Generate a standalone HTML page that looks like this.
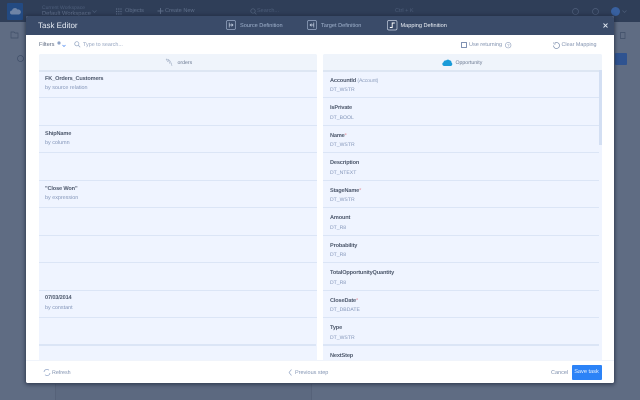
<!DOCTYPE html>
<html><head><meta charset="utf-8">
<style>
html,body{margin:0;padding:0;width:640px;height:400px;overflow:hidden;background:#5f6c83;font-family:"Liberation Sans",sans-serif;text-rendering:geometricPrecision}
div,span{position:absolute;white-space:nowrap}
svg{position:absolute;overflow:visible}
#wrap{position:absolute;left:0;top:0;width:640px;height:400px;filter:blur(.3px);overflow:hidden}
.b{font-weight:bold;color:#4d586c;font-size:5.6px;letter-spacing:-.15px;line-height:8px}
.s{color:#8395b9;font-size:5.4px;line-height:8px}
.d{color:#8395b9;font-size:5.100px;line-height:8px}
.l{height:1px;background:#dbe5f6}
.n{color:#6d7c96;font-size:5.5px;line-height:8px}
</style></head><body>
<div id="wrap">
<div style="left:0;top:0;width:640px;height:22px;background:#2f3e58"></div>
<div style="left:6.500px;top:3px;width:16.500px;height:16.500px;background:#234a82;border-radius:1px"></div>
<svg style="left:10px;top:8px" width="11" height="7"><path d="M2 6.500a2 2 0 0 1 0-4 3 3 0 0 1 5.500-1 2.500 2.500 0 0 1 1.500 5z" fill="#6f84a6"/></svg>
<div style="left:42px;top:3.500px;font-size:5px;color:#4e5f7c;line-height:8px">Current Workspace</div>
<div style="left:42px;top:9.500px;font-size:5.800px;color:#61708b;line-height:8px">Default Workspace</div>
<svg style="left:92px;top:10px" width="6" height="4"><path d="M.5.500l2 2 2-2" fill="none" stroke="#4f5f7b" stroke-width=".6"/></svg>
<div style="left:125px;top:7px;font-size:5.600px;color:#5f6f8a;line-height:8px">Objects</div>
<div style="left:165px;top:7px;font-size:5.600px;color:#5f6f8a;line-height:8px">Create New</div>
<div style="left:257px;top:7px;font-size:5.500px;color:#4c5c78;line-height:8px">Search...</div>
<div style="left:395px;top:7px;font-size:5.500px;color:#4c5c78;line-height:8px">Ctrl + K</div>
<svg style="left:116px;top:8px" width="8" height="8"><path d="M0 1h6M0 3.500h6M0 6h6" stroke="#5a6a85" stroke-width="1.300" stroke-dasharray="1.200 1"/></svg>
<svg style="left:157px;top:8px" width="7" height="7"><path d="M3.500 0v6M.5 3h6" stroke="#5a6a85"/></svg>
<svg style="left:250px;top:8px" width="7" height="7"><circle cx="3" cy="3" r="2.200" fill="none" stroke="#55657f" stroke-width=".7"/><path d="M4.600 4.600l1.800 1.800" stroke="#55657f" stroke-width=".7"/></svg>
<svg style="left:572px;top:7.500px" width="7" height="7"><circle cx="3.500" cy="3.500" r="3" fill="none" stroke="#4f5f7b" stroke-width=".7"/></svg>
<svg style="left:592px;top:7.500px" width="7" height="7"><circle cx="3.500" cy="3.500" r="3" fill="none" stroke="#4f5f7b" stroke-width=".7"/></svg>
<div style="left:611px;top:7px;width:9px;height:9px;border-radius:50%;background:#38609f"></div>
<svg style="left:622px;top:10px" width="5" height="4"><path d="M.5.500l2 2 2-2" fill="none" stroke="#4f5f7b" stroke-width=".6"/></svg>
<div style="left:0;top:22px;width:26px;height:378px;background:#5f6c83"></div>
<svg style="left:10px;top:31px" width="9" height="8"><path d="M1 1h3l1 1h3v5H1z" fill="none" stroke="#3f4e68" stroke-width=".7"/></svg>
<svg style="left:17px;top:55px" width="7" height="7"><circle cx="3.500" cy="3.500" r="3" fill="none" stroke="#3f4e68" stroke-width=".7"/></svg>
<div style="left:615px;top:53px;width:12px;height:12px;background:#2f5390;border-radius:1px"></div>
<svg style="left:620px;top:31px" width="6" height="8"><path d="M.5 1.500h4.500v6H.5z" fill="none" stroke="#3f4e68" stroke-width=".7"/></svg>
<div style="left:55px;top:384px;width:255px;height:16px;background:#5c6980;border-left:1px solid #566279;border-right:1px solid #566279"></div>

<!-- modal -->
<div style="left:26px;top:16px;width:588px;height:367px;background:#fff;border-radius:2px;box-shadow:0 0 3px 1px rgba(30,40,60,.5),0 2px 4px rgba(30,40,60,.35)"></div>
<div style="left:26px;top:16px;width:588px;height:19px;background:#3a4b69;border-radius:2px 2px 0 0"></div>
<div style="left:38px;top:20.500px;font-size:8px;line-height:10px;color:#e6ebf3">Task Editor</div>

<svg style="left:226px;top:20px" width="11" height="11"><rect x=".5" y=".5" width="9" height="9" rx="1.500" fill="none" stroke="#9aabc6" stroke-width=".7"/><path d="M3.200 2.500v5M3.200 5h3.500M5.500 3.700L7 5 5.500 6.300" fill="none" stroke="#c4d0e2" stroke-width=".7"/></svg>
<div style="left:240px;top:21.500px;color:#a0b2cd;font-size:5.600px;line-height:8px">Source Definition</div>
<svg style="left:307px;top:20px" width="11" height="11"><rect x=".5" y=".5" width="9" height="9" rx="1.500" fill="none" stroke="#9aabc6" stroke-width=".7"/><path d="M6.800 2.500v5M6.800 5H3.300M4.500 3.700L3 5l1.500 1.300" fill="none" stroke="#c4d0e2" stroke-width=".7"/></svg>
<div style="left:321px;top:21.500px;color:#a0b2cd;font-size:5.600px;line-height:8px">Target Definition</div>
<svg style="left:387px;top:20px" width="11" height="11"><rect x=".5" y=".5" width="9.500" height="9.500" rx="1.500" fill="none" stroke="#c6d0e0" stroke-width=".7"/><path d="M2.800 7.500h2.400V3h2.600" fill="none" stroke="#fff" stroke-width=".9"/></svg>
<div style="left:400.500px;top:21.500px;color:#eef2f8;font-size:5.600px;line-height:8px">Mapping Definition</div>
<svg style="left:603px;top:23px" width="6" height="6"><path d="M.5.500l4 4M4.500.500l-4 4" stroke="#dfe6f0" stroke-width=".9"/></svg>

<!-- toolbar -->
<div class="n" style="left:39px;top:41px;font-size:5.700px;color:#59667e">Filters</div>
<svg style="left:56px;top:41px" width="11" height="7"><circle cx="3" cy="2" r="1.600" fill="#8fa3c6"/><path d="M6.500 4l1.500 1.500L9.500 4" fill="none" stroke="#4d8af0" stroke-width=".7"/></svg>
<svg style="left:74px;top:41px" width="7" height="7"><circle cx="2.800" cy="2.800" r="2.100" fill="none" stroke="#93a5c2" stroke-width=".7"/><path d="M4.400 4.400l1.800 1.800" stroke="#93a5c2" stroke-width=".7"/></svg>
<div class="s" style="left:83px;top:41px;color:#93a3bf">Type to search...</div>
<div style="left:461px;top:41.500px;width:4px;height:4px;border:.8px solid #7e90b2;border-radius:.5px"></div>
<div class="n" style="left:469px;top:41px;color:#7f90ae">Use returning</div>
<svg style="left:504.500px;top:41.500px" width="7" height="7"><circle cx="3.200" cy="3.200" r="2.800" fill="none" stroke="#8a9bb9" stroke-width=".6"/><text x="3.200" y="5" font-size="4.500" text-anchor="middle" fill="#8a9bb9" font-family="Liberation Sans">?</text></svg>
<svg style="left:553px;top:41.500px" width="7" height="7"><path d="M1.600 1.200A3 3 0 1 1 .5 3.500" fill="none" stroke="#7b8dac" stroke-width=".7"/><path d="M.6.300l.4 1.900 1.900-.3" fill="none" stroke="#7b8dac" stroke-width=".5"/></svg>
<div class="n" style="left:561.500px;top:41px;font-size:5.400px;color:#7f90ae">Clear Mapping</div>

<!-- left panel -->
<div style="left:39px;top:54px;width:278px;height:307px;background:#eff4ff;border-radius:2px 2px 0 0"></div>
<div style="left:39px;top:54px;width:278px;height:16px;background:#eff4fb;border-radius:2px 2px 0 0"></div>
<div style="left:39px;top:70px;width:278px;height:1.500px;background:#dde6f3"></div>
<svg style="left:165px;top:58px" width="9" height="9"><path d="M1 1c3 0 5 2 6 7M1 1l2 3M3 1c0 2 2 3 2 5" fill="none" stroke="#a3b0c5" stroke-width=".6"/></svg>
<div class="n" style="left:177.500px;top:58.500px;font-size:5.200px;color:#6c7a92">orders</div>

<!-- right panel -->
<div style="left:323px;top:54px;width:279px;height:307px;background:#eff4ff;border-radius:2px 2px 0 0"></div>
<div style="left:323px;top:54px;width:279px;height:16px;background:#eff4fb;border-radius:2px 2px 0 0"></div>
<div style="left:323px;top:70px;width:279px;height:1.500px;background:#dde6f3"></div>
<svg style="left:442px;top:58.500px" width="11" height="8"><path d="M2 7a2 2 0 0 1-.5-3.800A2 2 0 0 1 4 1.500a2.500 2.500 0 0 1 3.500-.3 2.300 2.300 0 0 1 2 2.300A2 2 0 0 1 9 7z" fill="#1a9bd8"/></svg>
<div class="n" style="left:455.500px;top:58.500px;font-size:5.200px;color:#6c7a92">Opportunity</div>

<!-- left lines -->
<div class="l" style="left:39px;top:97px;width:278px"></div>
<div class="l" style="left:39px;top:125px;width:278px"></div>
<div class="l" style="left:39px;top:152px;width:278px"></div>
<div class="l" style="left:39px;top:180px;width:278px"></div>
<div class="l" style="left:39px;top:207px;width:278px"></div>
<div class="l" style="left:39px;top:235px;width:278px"></div>
<div class="l" style="left:39px;top:262px;width:278px"></div>
<div class="l" style="left:39px;top:290px;width:278px"></div>
<div class="l" style="left:39px;top:317px;width:278px"></div>
<div class="l" style="left:39px;top:344px;width:277px;height:1.500px"></div>

<div class="b" style="left:45px;top:74.500px">FK_Orders_Customers</div>
<div class="s" style="left:45px;top:83.500px">by source relation</div>
<div class="b" style="left:45px;top:129.500px">ShipName</div>
<div class="s" style="left:45px;top:138.500px">by column</div>
<div class="b" style="left:45px;top:184.500px">"Close Won"</div>
<div class="s" style="left:45px;top:193.500px">by expression</div>
<div class="b" style="left:45px;top:294px">07/03/2014</div>
<div class="s" style="left:45px;top:303.500px">by constant</div>

<!-- right lines -->
<div class="l" style="left:323px;top:97px;width:276px"></div>
<div class="l" style="left:323px;top:125px;width:276px"></div>
<div class="l" style="left:323px;top:152px;width:276px"></div>
<div class="l" style="left:323px;top:180px;width:276px"></div>
<div class="l" style="left:323px;top:207px;width:276px"></div>
<div class="l" style="left:323px;top:235px;width:276px"></div>
<div class="l" style="left:323px;top:262px;width:276px"></div>
<div class="l" style="left:323px;top:290px;width:276px"></div>
<div class="l" style="left:323px;top:317px;width:276px"></div>
<div class="l" style="left:323px;top:344px;width:276px;height:1.500px"></div>
<div style="left:599px;top:70px;width:3px;height:75px;background:#d3dff3"></div>

<div class="b" style="left:330px;top:76.500px">AccountId <span style="position:static;font-weight:normal;color:#8fa0bf;font-size:5.200px">(Account)</span></div>
<div class="d" style="left:330px;top:86px">DT_WSTR</div>
<div class="b" style="left:330px;top:104px">IsPrivate</div>
<div class="d" style="left:330px;top:113.500px">DT_BOOL</div>
<div class="b" style="left:330px;top:131.500px">Name<span style="position:static;color:#e58a94;font-weight:normal">*</span></div>
<div class="d" style="left:330px;top:141px">DT_WSTR</div>
<div class="b" style="left:330px;top:159px">Description</div>
<div class="d" style="left:330px;top:168.500px">DT_NTEXT</div>
<div class="b" style="left:330px;top:186.500px">StageName<span style="position:static;color:#e58a94;font-weight:normal">*</span></div>
<div class="d" style="left:330px;top:196px">DT_WSTR</div>
<div class="b" style="left:330px;top:214px">Amount</div>
<div class="d" style="left:330px;top:223.500px">DT_R8</div>
<div class="b" style="left:330px;top:241.500px">Probability</div>
<div class="d" style="left:330px;top:251px">DT_R8</div>
<div class="b" style="left:330px;top:269px">TotalOpportunityQuantity</div>
<div class="d" style="left:330px;top:278.500px">DT_R8</div>
<div class="b" style="left:330px;top:296.500px">CloseDate<span style="position:static;color:#e58a94;font-weight:normal">*</span></div>
<div class="d" style="left:330px;top:306px">DT_DBDATE</div>
<div class="b" style="left:330px;top:324px">Type</div>
<div class="d" style="left:330px;top:333.500px">DT_WSTR</div>
<div class="b" style="left:330px;top:351.500px">NextStep</div>

<!-- footer -->
<div style="left:26px;top:360px;width:588px;height:23px;background:#fff;border-radius:0 0 2px 2px;border-top:1px solid #f0f4fb;box-sizing:border-box"></div>
<svg style="left:43px;top:369px" width="8" height="7"><path d="M1 3a3 3 0 0 1 5-1.800M7 4a3 3 0 0 1-5 1.800" fill="none" stroke="#8fa3c6" stroke-width=".7"/></svg>
<div class="n" style="left:52px;top:368.500px;font-size:5.300px;color:#7f90ae">Refresh</div>
<svg style="left:288px;top:369px" width="5" height="7"><path d="M3.500.500L1 3.500l2.500 3" fill="none" stroke="#93a5c4" stroke-width=".6"/></svg>
<div class="n" style="left:295px;top:368.500px;color:#8193b2">Previous step</div>
<div class="n" style="left:551px;top:368.500px;color:#7f90ae">Cancel</div>
<div style="left:571.500px;top:364.500px;width:30px;height:15.500px;background:#2c83f7;border-radius:1px;color:#eaf3ff;font-size:5.600px;line-height:15.500px;text-align:center">Save task</div>
</div>
</body></html>
